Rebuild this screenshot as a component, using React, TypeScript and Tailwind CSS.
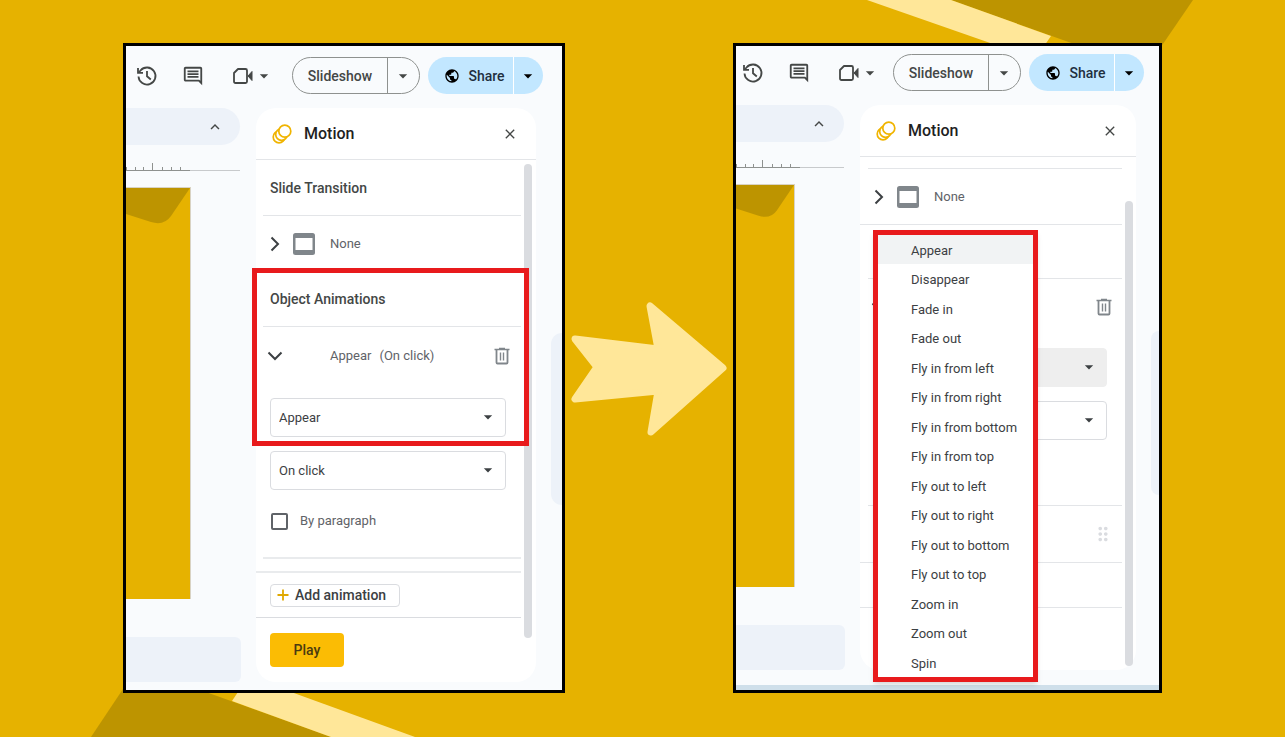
import React from 'react';
import {
  MdArrowDropDown,
  MdClose,
  MdDragIndicator,
  MdKeyboardArrowUp,
  MdOutlineInsertComment,
  MdPublic,
} from 'react-icons/md';

const effects = [
  'Appear',
  'Disappear',
  'Fade in',
  'Fade out',
  'Fly in from left',
  'Fly in from right',
  'Fly in from bottom',
  'Fly in from top',
  'Fly out to left',
  'Fly out to right',
  'Fly out to bottom',
  'Fly out to top',
  'Zoom in',
  'Zoom out',
  'Spin',
];

function HistoryIcon() {
  return (
    <svg viewBox="0 0 22 22" className="size-[22px]" fill="none" stroke="currentColor" strokeWidth="1.8" aria-hidden="true">
      <path d="M2.5 11.500A8.500 8.500 0 1 0 4.500 5.500L2.800 7.500" />
      <path d="M2 3V7.800H7" />
      <path d="M11 6V11.300L14.800 14.500" />
    </svg>
  );
}

function MotionIcon() {
  return (
    <svg viewBox="0 0 20 20" className="size-5" fill="#fff" stroke="#f0b400" strokeWidth="1.7" aria-hidden="true">
      <circle cx="7" cy="13" r="5.800" />
      <circle cx="9.500" cy="10.500" r="5.800" />
      <circle cx="12.800" cy="7.200" r="6" />
    </svg>
  );
}

function CameraIcon() {
  return (
    <svg viewBox="0 0 22 18" className="w-[22px] h-[18px]" fill="none" aria-hidden="true">
      <path d="M6 2H13.5Q15 2 15 3.5V14.5Q15 16 13.5 16H3.5Q2 16 2 14.5V6Z" stroke="currentColor" strokeWidth="1.8" strokeLinejoin="round" />
      <path d="M16 9L20 4.500V13.500Z" fill="currentColor" stroke="currentColor" />
    </svg>
  );
}

function TrashIcon() {
  return (
    <svg viewBox="0 0 16 18" className="w-4 h-[18px]" fill="none" stroke="currentColor" aria-hidden="true">
      <path d="M0.5 2.5H15.5M5 1.5H11" strokeWidth="1.5" />
      <path d="M2.5 3V15.5Q2.5 16.5 3.5 16.5H12.5Q13.5 16.5 13.5 15.5V3" strokeWidth="1.8" />
      <path d="M6.5 5.5V13.5M9.5 5.5V13.5" strokeWidth="1.4" />
    </svg>
  );
}

function SlideIcon() {
  return (
    <svg viewBox="0 0 24 24" className="w-6 h-6" aria-hidden="true">
      <rect x="1" y="1" width="22" height="22" rx="2.5" fill="#80868b" />
      <rect x="3.5" y="6" width="17" height="12" fill="#fff" />
    </svg>
  );
}

function Chevron({ down }: { down?: boolean }) {
  return (
    <svg viewBox="0 0 16 16" className="w-4 h-4" fill="none" stroke="#3c4043" strokeWidth="2" aria-hidden="true">
      <path d={down ? 'M1.5 4.5L8 11L14.5 4.5' : 'M4.5 1.5L11 8L4.5 14.5'} />
    </svg>
  );
}

function Toolbar({ className }: { className: string }) {
  return (
    <div className={`flex items-start justify-end text-[#444746] ${className}`}>
      <div className="flex flex-1 items-center h-[37px]">
        <button aria-label="Version history"><HistoryIcon /></button>
        <button aria-label="Comments" className="ml-6"><MdOutlineInsertComment className="size-[22px]" /></button>
        <button aria-label="Call" className="flex items-center ml-7">
          <CameraIcon />
          <MdArrowDropDown className="size-5" />
        </button>
      </div>
      <div className="flex h-[37px] rounded-full border border-[#8e918f] text-sm font-medium">
        <button className="w-[94px]">Slideshow</button>
        <button aria-label="Slideshow options" className="flex w-8 items-center justify-center border-l border-[#8e918f] pr-[2px]">
          <MdArrowDropDown className="size-5" />
        </button>
      </div>
      <div className="ml-2 flex h-[37px] rounded-full bg-[#c2e7ff] text-sm font-medium">
        <button className="flex w-[85px] items-center justify-center gap-2 pl-2 text-[#1f2f3f]">
          <MdPublic className="size-4 text-black" />
          Share
        </button>
        <button aria-label="Share options" className="flex w-[30px] items-center justify-center border-l border-white pr-[2px] text-black">
          <MdArrowDropDown className="size-5" />
        </button>
      </div>
    </div>
  );
}

function SlideCanvas() {
  return (
    <div className="flex flex-1 flex-col">
      <div className="mr-4 flex h-[37px] items-center justify-end rounded-r-full bg-[#edf2f9] pr-4 text-[#444746]">
        <button aria-label="Collapse"><MdKeyboardArrowUp className="size-[18px]" /></button>
      </div>
      <div className="mt-4 mr-4 h-[10px] border-b border-[#c8cacc]">
        <svg viewBox="0 0 64 10" className="h-[10px] w-16" stroke="#8e918f" aria-hidden="true">
          <path d="M0.5 6V10M9.5 6V10M17.5 6V10M26.5 2V10M36.5 6V10M45.5 6V10M54.5 6V10M0 9.5H64" />
        </svg>
      </div>
      <div className="mt-4 mr-[65px] flex-1 border-t border-r border-[#d9d3c4] bg-[#e6b200]">
        <svg viewBox="0 0 64 37" className="w-full" aria-hidden="true">
          <path d="M0 0H64L45 28Q38 38 25 34L0 26Z" fill="#bd9400" />
        </svg>
      </div>
      <div className="mt-[38px] mr-[15px] h-[45px] rounded-r-md bg-[#edf2f9]" />
    </div>
  );
}

function PanelHeader() {
  return (
    <div className="flex h-[52px] items-center border-b border-[#e3e5e8] pr-[18px] pl-4">
      <MotionIcon />
      <h2 className="ml-3 flex-1 font-medium text-[#1f1f1f]">Motion</h2>
      <button aria-label="Close" className="text-[#444746]"><MdClose className="size-4" /></button>
    </div>
  );
}

function SelectBox({ label, value, className }: { label: string; value: string; className?: string }) {
  return (
    <div className={`relative mr-[15px] ml-[14px] h-[39px] rounded-[4px] border text-[#3c4043] ${className ?? ''}`}>
      <select aria-label={label} defaultValue={value} className="h-full w-full appearance-none px-2 text-[13px]">
        <option>{value}</option>
      </select>
      <MdArrowDropDown className="pointer-events-none absolute top-2 right-[7px] size-5" />
    </div>
  );
}

function TransitionRow({ className }: { className: string }) {
  return (
    <div className={`flex items-center pl-[11px] text-[13px] text-[#5f6368] ${className}`}>
      <button aria-label="Expand transition"><Chevron /></button>
      <span className="mr-[14px] ml-[9px]"><SlideIcon /></span>
      None
    </div>
  );
}

function BeforeCard() {
  return (
    <section className="flex flex-col border-[3px] border-black bg-[#f9fbfd]">
      <Toolbar className="h-[62px] pt-[11px] pr-[19px] pl-[10px]" />
      <div className="flex flex-1 pb-2">
        <SlideCanvas />
        <div className="w-[280px] rounded-[20px] bg-white">
          <PanelHeader />
          <div className="flex">
            <div className="flex-1">
              <h3 className="ml-[7px] flex h-14 items-center border-b border-[#e3e5e8] pl-[7px] text-sm font-medium text-[#444746]">
                Slide Transition
              </h3>
              <TransitionRow className="h-[52px] pt-1" />
              <div className="relative pb-[9px]">
                <h3 className="ml-[7px] flex h-[59px] items-center border-b border-[#e3e5e8] pt-1 pl-[7px] text-sm font-medium text-[#444746]">
                  Object Animations
                </h3>
                <div className="flex h-[57px] items-center pr-[11px] pl-[11px] text-[13px] text-[#5f6368]">
                  <button aria-label="Collapse animation"><Chevron down /></button>
                  <span className="ml-[47px]">Appear</span>
                  <span className="ml-2 flex-1">(On click)</span>
                  <button aria-label="Delete animation" className="text-[#80868b]"><TrashIcon /></button>
                </div>
                <SelectBox label="Effect" value="Appear" className="mt-[14px] border-[#dadce0]" />
                <div className="pointer-events-none absolute inset-y-0 -right-2 -left-1 border-[5px] border-[#e81a1c]" />
              </div>
              <SelectBox label="Start" value="On click" className="mt-[5px] border-[#dadce0]" />
              <div className="ml-[7px] border-b-2 border-[#e9ebed] pt-[21px] pb-[26px] pl-2">
                <label className="flex h-5 items-center gap-3 text-[13px] text-[#5f6368]">
                  <input type="checkbox" className="size-[17px] appearance-none rounded-[2px] border-2 border-[#5f6368]" />
                  By paragraph
                </label>
              </div>
              <div className="h-[14px] border-b-2 border-[#e9ebed]" />
              <div className="flex h-[45px] items-center border-b border-[#dadce0] pl-[14px]">
                <button className="flex h-[23px] w-[130px] items-center gap-[6px] rounded-[4px] border border-[#dadce0] pl-[6px] text-sm font-medium text-[#3c4043]">
                  <svg viewBox="0 0 12 12" className="size-3" stroke="#e0a800" strokeWidth="1.8" aria-hidden="true">
                    <path d="M6 0.5V11.5M0.5 6H11.5" />
                  </svg>
                  Add animation
                </button>
              </div>
              <div className="py-[15px] pl-[14px]">
                <button className="h-[34px] w-[74px] rounded-[4px] bg-[#fbbc04] text-sm font-medium text-[#4a3a10]">Play</button>
              </div>
            </div>
            <div className="mt-1 mr-1 mb-11 ml-[3px] w-2 rounded-full bg-[#dadce0]" />
          </div>
        </div>
        <div className="flex w-[26px] justify-end">
          <div className="mt-[225px] h-[172px] w-[11px] rounded-l-2xl bg-[#edf2f9]" />
        </div>
      </div>
    </section>
  );
}

function AfterCard() {
  return (
    <section className="flex flex-col border-[3px] border-black bg-[#f9fbfd]">
      <Toolbar className="h-[59px] pt-2 pr-[15px] pl-[6px]" />
      <div className="flex flex-1 pb-[15px]">
        <SlideCanvas />
        <div className="relative flex w-[276px] flex-col rounded-[20px] bg-white">
          <PanelHeader />
          <div className="flex flex-1">
            <div className="flex-1">
              <div className="ml-2 h-3 border-b border-[#e3e5e8]" />
              <TransitionRow className="h-14 border-b border-[#e3e5e8]" />
              <div className="ml-2 h-[54px] border-b border-[#e3e5e8]" />
              <div className="flex h-14 items-center justify-between pr-[10px] pl-[11px]">
                <button aria-label="Collapse animation"><Chevron down /></button>
                <button aria-label="Delete animation" className="text-[#80868b]"><TrashIcon /></button>
              </div>
              <SelectBox label="Effect" value="Appear" className="mt-[13px] border-[#eeeeee] bg-[#eeeeee]" />
              <SelectBox label="Start" value="On click" className="mt-[14px] border-[#dadce0]" />
              <div className="ml-2 h-[66px] border-b border-[#e3e5e8]" />
              <div className="flex h-[57px] items-center justify-end border-b border-[#e3e5e8] pr-2 text-[#dadce0]">
                <MdDragIndicator className="size-[22px]" />
              </div>
              <div className="h-[45px] border-b border-[#e3e5e8]" />
            </div>
            <div className="mt-11 mr-[3px] mb-1 ml-[3px] w-2 rounded-full bg-[#dadce0]" />
          </div>
          <ul className="absolute top-[125px] left-[13px] grid h-[452px] w-[165px] auto-rows-fr border-[5px] border-[#e81a1c] bg-white shadow-md">
            {effects.map((effect, i) => (
              <li key={effect} className={i === 0 ? 'flex bg-[#f1f3f4]' : 'flex'}>
                <button className="flex-1 pt-[2px] pl-[33px] text-left text-[13px] whitespace-nowrap text-[#3c4043]">{effect}</button>
              </li>
            ))}
          </ul>
        </div>
        <div className="flex w-[23px] justify-end">
          <div className="mt-[226px] h-[164px] w-2 rounded-l-2xl bg-[#edf2f9]" />
        </div>
      </div>
      <div className="h-[5px] bg-[#cfdfea]" />
    </section>
  );
}

export default function App() {
  return (
    <div className="relative flex min-h-screen items-center justify-center overflow-hidden bg-[#e6b200] pb-px font-['Roboto',sans-serif]">
      <svg viewBox="0 0 435 60" className="absolute top-0 right-0 h-[60px] w-[435px]" aria-hidden="true">
        <path d="M101 0H343L302 60H269Z" fill="#bd9400" />
        <path d="M17 0H101L201 36L190 52L166 52Z" fill="#ffe799" />
      </svg>
      <svg viewBox="0 0 360 60" className="absolute bottom-0 left-[90px] h-[60px] w-[360px]" aria-hidden="true">
        <path d="M1 60L41 0H74L241 60Z" fill="#bd9400" />
        <path d="M142 24L154 6L179 7L325 60H241Z" fill="#ffe799" />
      </svg>
      <main className="relative grid w-full max-w-[1039px] grid-cols-[442fr_168fr_429fr]">
        <BeforeCard />
        <div className="flex items-center justify-center">
          <svg viewBox="0 0 158 136" className="h-[136px] w-[158px]" aria-label="Then" role="img">
            <path
              d="M153 68L80 6L88 49L5 39L27 67L5 99L88 91L81 132Z"
              fill="#ffe799"
              stroke="#ffe799"
              strokeWidth="7"
              strokeLinejoin="round"
            />
          </svg>
        </div>
        <AfterCard />
      </main>
    </div>
  );
}
